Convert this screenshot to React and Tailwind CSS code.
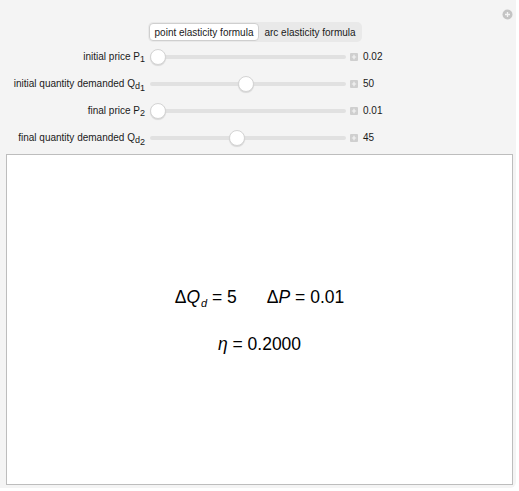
import React from "react";

const rows = [
  { label: "initial price P", sub: "1", value: "0.02", pos: 0, subSub: false },
  { label: "initial quantity demanded Q", sub: "d", subSub: "1", value: "50", pos: 0.49 },
  { label: "final price P", sub: "2", value: "0.01", pos: 0, subSub: false },
  { label: "final quantity demanded Q", sub: "d", subSub: "2", value: "45", pos: 0.44 },
];

function Slider({ pos }) {
  return (
    <div className="relative h-[16px] w-[196px]">
      <div className="absolute left-0 right-0 top-[6px] h-[4px] rounded-full bg-[#e1e1e1]" />
      <div
        className="absolute top-0 h-[16px] w-[16px] rounded-full border border-[#d4d4d4] bg-white shadow-[0_1px_1px_rgba(0,0,0,0.12)]"
        style={{ left: `${pos * 180}px` }}
      />
    </div>
  );
}

function PlusBox() {
  return (
    <svg width="8" height="8" viewBox="0 0 8 8">
      <rect x="0" y="0" width="8" height="8" rx="1" fill="#cfcfcf" />
      <path d="M4 1.8v4.4M1.8 4h4.4" stroke="#f4f4f4" strokeWidth="1.2" />
    </svg>
  );
}

export default function App() {
  return (
    <div className="h-[491px] w-[519px] bg-white" style={{ fontFamily: "'Liberation Sans', Arial, sans-serif" }}>
      <div className="relative h-[488px] w-[516px] rounded-br-[6px] bg-[#f4f4f4] pt-[22px]">
        <svg className="absolute left-[502px] top-[9px]" width="11" height="11" viewBox="0 0 11 11">
          <circle cx="5.5" cy="5.5" r="5" fill="#c4c4c4" />
          <path d="M5.5 3v5M3 5.5h5" stroke="#f4f4f4" strokeWidth="1.3" />
        </svg>

        <div className="ml-[148px] flex h-[20px] w-[214px] items-center rounded-[5px] bg-[#e9e9e9] px-[1px] text-[10px] text-[#1a1a1a]">
          <div className="flex h-[18px] w-[110px] items-center justify-center rounded-[4px] border border-[#cfcfcf] bg-white">
            point elasticity formula
          </div>
          <div className="flex h-[18px] flex-1 items-center justify-center">arc elasticity formula</div>
        </div>

        <div className="mt-[7px] flex flex-col gap-[11px] text-[10px] text-[#1a1a1a]">
          {rows.map((r, i) => (
            <div key={i} className="flex h-[16px] items-center">
              <div className="w-[145px] text-right leading-none">
                {r.label}
                <sub className="relative top-[2px] align-baseline text-[9px]">
                  {r.sub}
                  {r.subSub && <span className="relative top-[2px] text-[9px]">{r.subSub}</span>}
                </sub>
              </div>
              <div className="ml-[5px]">
                <Slider pos={r.pos} />
              </div>
              <div className="ml-[4px] flex items-center">
                <PlusBox />
              </div>
              <div className="ml-[5px] leading-none">{r.value}</div>
            </div>
          ))}
        </div>

        <div className="ml-[6px] mt-[8px] flex h-[331px] w-[507px] flex-col items-center justify-center border border-[#bdbdbd] bg-white text-[17.5px] text-black">
          <div className="mt-[2px] flex gap-[30px]">
            <span className="whitespace-pre">
              Δ<i>Q</i>
              <i className="relative top-[4px] ml-[1px] text-[11px]">d</i> = 5
            </span>
            <span className="whitespace-pre">
              Δ<i>P</i> = 0.01
            </span>
          </div>
          <div className="mt-[20px] whitespace-pre">
            <i>η</i> = 0.2000
          </div>
        </div>
      </div>
    </div>
  );
}
